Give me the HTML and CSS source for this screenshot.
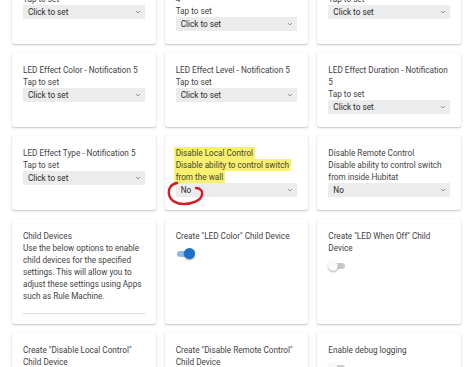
FILE: index.html
```html
<!DOCTYPE html>
<html lang="en">
<head>
  <meta charset="UTF-8" />
  <meta name="viewport" content="width=device-width, initial-scale=1.0"/>
  <title>Device Preferences</title>
  <link rel="stylesheet" href="styles.css">
</head>
<body>
  <div class="grid">
    <!-- notification 4 (scrolled partly out of view) -->
    <div class="card">
      <div class="title">LED Effect Level - Notification 4</div>
      <div class="desc">Tap to set</div>
      <div class="select"><span>Click to set</span><svg width="6" height="4" viewBox="0 0 6 4"><path d="M1 1 L3 3 L5 1" /></svg></div>
    </div>
    <div class="card">
      <div class="title">LED Effect Duration - Notification 4</div>
      <div class="desc">Tap to set</div>
      <div class="select"><span>Click to set</span><svg width="6" height="4" viewBox="0 0 6 4"><path d="M1 1 L3 3 L5 1" /></svg></div>
    </div>
    <div class="card">
      <div class="title">LED Effect Type - Notification 4</div>
      <div class="desc">Tap to set</div>
      <div class="select"><span>Click to set</span><svg width="6" height="4" viewBox="0 0 6 4"><path d="M1 1 L3 3 L5 1" /></svg></div>
    </div>

    <!-- notification 5 -->
    <div class="card">
      <div class="title">LED Effect Color - Notification 5</div>
      <div class="desc">Tap to set</div>
      <div class="select"><span>Click to set</span><svg width="6" height="4" viewBox="0 0 6 4"><path d="M1 1 L3 3 L5 1" /></svg></div>
    </div>
    <div class="card">
      <div class="title">LED Effect Level - Notification 5</div>
      <div class="desc">Tap to set</div>
      <div class="select"><span>Click to set</span><svg width="6" height="4" viewBox="0 0 6 4"><path d="M1 1 L3 3 L5 1" /></svg></div>
    </div>
    <div class="card">
      <div class="title">LED Effect Duration - Notification 5</div>
      <div class="desc">Tap to set</div>
      <div class="select"><span>Click to set</span><svg width="6" height="4" viewBox="0 0 6 4"><path d="M1 1 L3 3 L5 1" /></svg></div>
    </div>

    <div class="card">
      <div class="title">LED Effect Type - Notification 5</div>
      <div class="desc">Tap to set</div>
      <div class="select"><span>Click to set</span><svg width="6" height="4" viewBox="0 0 6 4"><path d="M1 1 L3 3 L5 1" /></svg></div>
    </div>
    <div class="card">
      <div class="title"><mark class="hl">Disable Local Control</mark></div>
      <div class="desc"><mark class="hl">Disable ability to control switch from the wall</mark></div>
      <div class="select"><span>No</span><svg width="6" height="4" viewBox="0 0 6 4"><path d="M1 1 L3 3 L5 1" /></svg></div>
      <svg class="circle" width="37" height="25" viewBox="0 0 37 25">
        <path d="M10 2 C4 3, 1 8, 2 13 C3 20, 10 23, 17 23 C26 23, 34 19, 35 14 C36 10, 33 7, 29 7" />
      </svg>
    </div>
    <div class="card">
      <div class="title">Disable Remote Control</div>
      <div class="desc">Disable ability to control switch from inside Hubitat</div>
      <div class="select"><span>No</span><svg width="6" height="4" viewBox="0 0 6 4"><path d="M1 1 L3 3 L5 1" /></svg></div>
    </div>

    <!-- child devices -->
    <div class="card">
      <div class="title">Child Devices</div>
      <div class="desc">Use the below options to enable child devices for the specified settings. This will allow you to adjust these settings using Apps such as Rule Machine.</div>
      <div class="field"></div>
    </div>
    <div class="card">
      <div class="title">Create "LED Color" Child Device</div>
      <div class="switch on"><span class="track"></span><span class="thumb"></span></div>
    </div>
    <div class="card">
      <div class="title">Create "LED When Off" Child Device</div>
      <div class="switch"><span class="track"></span><span class="thumb"></span></div>
    </div>

    <div class="card">
      <div class="title">Create "Disable Local Control" Child Device</div>
      <div class="switch"><span class="track"></span><span class="thumb"></span></div>
    </div>
    <div class="card">
      <div class="title">Create "Disable Remote Control" Child Device</div>
      <div class="switch"><span class="track"></span><span class="thumb"></span></div>
    </div>
    <div class="card">
      <div class="title">Enable debug logging</div>
      <div class="switch"><span class="track"></span><span class="thumb"></span></div>
    </div>
  </div>
</body>
</html>
```

FILE: styles.css
```css
body {
  font-family: Roboto, "Liberation Sans", sans-serif;
  background-color: #fff;
  margin: 0;
  overflow: hidden;
}

.grid {
  display: grid;
  grid-template-columns: repeat(3, 1fr);
  gap: 9px;
  padding: 0 13px 0 12px;
  margin-top: -30px;
}

.card {
  position: relative;
  background: #fff;
  padding: 10.5px 11px 13.5px;
  border-radius: 2px;
  box-shadow: 0 1px 2px rgba(0,0,0,0.22), 0 0 1px rgba(0,0,0,0.14);
  font-size: 8.2px;
  line-height: 12px;
  color: #424242;
}

.select {
  display: flex;
  align-items: center;
  justify-content: space-between;
  height: 14px;
  padding: 0 4px 0 5px;
  background: #ececec;
  color: #2a2a2a;
}

.select svg path {
  fill: none;
  stroke: #8a8a8a;
  stroke-width: 0.9;
}

.field {
  height: 11px;
  border-bottom: 1px solid #dedede;
  margin-bottom: -3px;
}

.hl {
  background: #f7f070;
  color: #45452f;
  padding: 1px 2px;
  margin-left: -2px;
  -webkit-box-decoration-break: clone;
  box-decoration-break: clone;
}

.circle {
  position: absolute;
  left: 2px;
  top: 45px;
}

.circle path {
  fill: none;
  stroke: #d41c27;
  stroke-width: 2.4;
  stroke-linecap: round;
}

.switch {
  position: relative;
  width: 19px;
  height: 11px;
  margin-top: 7px;
}

.switch .track {
  position: absolute;
  left: 1px;
  top: 2.5px;
  width: 16px;
  height: 6px;
  border-radius: 3px;
  background: #c8c8c8;
}

.switch .thumb {
  position: absolute;
  left: 0;
  top: 0;
  width: 10px;
  height: 10px;
  border-radius: 50%;
  background: #fafafa;
  box-shadow: 0 1px 2px rgba(0,0,0,0.35);
}

.switch.on .track {
  background: #8fb8e6;
}

.switch.on .thumb {
  left: 8px;
  width: 11px;
  height: 11px;
  top: -0.5px;
  background: #1c6fc9;
}
```
